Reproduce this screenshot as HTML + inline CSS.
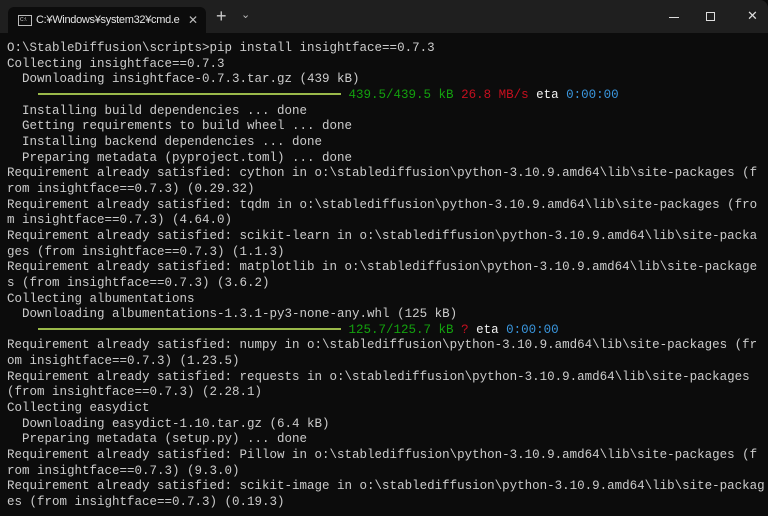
<!DOCTYPE html>
<html><head><meta charset="utf-8"><style>
html,body{margin:0;padding:0;width:768px;height:516px;overflow:hidden;background:#0c0c0c}
.title{position:absolute;left:0;top:0;width:768px;height:33px;background:#1f1f1f;border-top-right-radius:8px}
.tab{position:absolute;left:8px;top:7px;width:198px;height:27px;background:#0c0c0c;border-radius:6px 6px 0 0;font-family:"Liberation Sans","Noto Sans CJK JP",sans-serif;font-size:11px;color:#e6e6e6;white-space:nowrap;overflow:hidden}
.tab .ic{position:absolute;left:10px;top:8px;width:14px;height:11px;border:1px solid #bbb;box-sizing:border-box;font-size:5px;line-height:8px;color:#ddd;padding-left:1px}
.tab .t{position:absolute;left:28px;top:7px;width:145px;overflow:hidden;letter-spacing:-0.3px}
.tab .x{position:absolute;left:180px;top:6px;font-size:12px;color:#bbb}
.plus{position:absolute;left:216px;top:6px;color:#ccc;font:18px "Liberation Sans",sans-serif}
.chev{position:absolute;left:241px;top:8px;color:#bbb;font:11px "DejaVu Sans",sans-serif}
.wc{position:absolute;top:9px;color:#ddd;font:13px "DejaVu Sans",sans-serif}
pre{position:absolute;left:7px;top:41px;margin:0;font-family:"Liberation Mono",monospace;font-size:12.5px;line-height:15.65px;color:#cccccc;white-space:pre}
.g{color:#13a10e}.r{color:#c50f1f}.b{color:#3a96dd}.w{color:#f2f2f2}
.bar{display:inline-block;height:2px;background:#9ab94a;vertical-align:middle;position:relative;top:-1px}
</style></head><body>
<div class="title">
 <div class="tab"><div class="ic">C:\</div><span class="t">C:¥Windows¥system32¥cmd.e</span><span class="x">✕</span></div>
 <div class="plus">+</div><div class="chev">⌄</div>
 <div style="position:absolute;left:669px;top:17px;width:10px;height:1px;background:#ddd"></div>
 <div style="position:absolute;left:706px;top:12px;width:9px;height:9px;border:1px solid #ddd;box-sizing:border-box"></div>
 <div class="wc" style="left:747px">✕</div>
</div>
<pre>O:\StableDiffusion\scripts&gt;pip install insightface==0.7.3
Collecting insightface==0.7.3
  Downloading insightface-0.7.3.tar.gz (439 kB)
    <span class="bar" style="width:303px;margin-left:1px"></span> <span class="g">439.5/439.5 kB</span> <span class="r">26.8 MB/s</span> <span class="w">eta</span> <span class="b">0:00:00</span>
  Installing build dependencies ... done
  Getting requirements to build wheel ... done
  Installing backend dependencies ... done
  Preparing metadata (pyproject.toml) ... done
Requirement already satisfied: cython in o:\stablediffusion\python-3.10.9.amd64\lib\site-packages (f
rom insightface==0.7.3) (0.29.32)
Requirement already satisfied: tqdm in o:\stablediffusion\python-3.10.9.amd64\lib\site-packages (fro
m insightface==0.7.3) (4.64.0)
Requirement already satisfied: scikit-learn in o:\stablediffusion\python-3.10.9.amd64\lib\site-packa
ges (from insightface==0.7.3) (1.1.3)
Requirement already satisfied: matplotlib in o:\stablediffusion\python-3.10.9.amd64\lib\site-package
s (from insightface==0.7.3) (3.6.2)
Collecting albumentations
  Downloading albumentations-1.3.1-py3-none-any.whl (125 kB)
    <span class="bar" style="width:303px;margin-left:1px"></span> <span class="g">125.7/125.7 kB</span> <span class="r">?</span> <span class="w">eta</span> <span class="b">0:00:00</span>
Requirement already satisfied: numpy in o:\stablediffusion\python-3.10.9.amd64\lib\site-packages (fr
om insightface==0.7.3) (1.23.5)
Requirement already satisfied: requests in o:\stablediffusion\python-3.10.9.amd64\lib\site-packages
(from insightface==0.7.3) (2.28.1)
Collecting easydict
  Downloading easydict-1.10.tar.gz (6.4 kB)
  Preparing metadata (setup.py) ... done
Requirement already satisfied: Pillow in o:\stablediffusion\python-3.10.9.amd64\lib\site-packages (f
rom insightface==0.7.3) (9.3.0)
Requirement already satisfied: scikit-image in o:\stablediffusion\python-3.10.9.amd64\lib\site-packag
es (from insightface==0.7.3) (0.19.3)</pre>
</body></html>
